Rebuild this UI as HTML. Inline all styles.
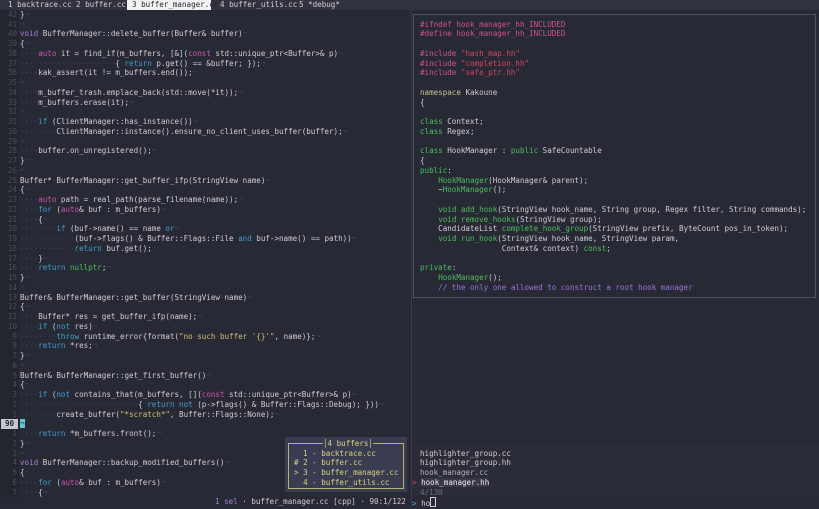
<!DOCTYPE html>
<html><head><meta charset="utf-8"><style>
*{margin:0;padding:0}
body{width:819px;height:507px;overflow:hidden;background:#272935;font-family:"DejaVu Sans Mono","Liberation Mono",monospace;font-size:7.56px;color:#cfcfd4;position:relative}
.r{position:absolute;height:9.75px;line-height:9.75px;white-space:pre}
.L{left:20px}
.n{position:absolute;left:0;width:17px;text-align:right;color:#4a4e5e;height:9.75px;line-height:9.75px}
.d{color:#42465a}
.k{color:#a77ed6}.m{color:#cf55a9}.b{color:#3f9fcc}.g{color:#4cbf5c}.s{color:#cfc272}
.p{color:#d1538c}.q{color:#d6455e}.y{color:#c6c28e}.c{color:#9a74d8}
#tabs{position:absolute;left:0;top:0;width:819px;height:10px;background:#30323e;color:#d0d0d6}
#tabs span{position:absolute;top:0;line-height:10px;white-space:pre}
#gut{position:absolute;left:0;top:10px;width:19px;height:487px;background:#23252f}
#sep{position:absolute;left:411px;top:10px;width:1px;height:497px;background:#3a3c48}
#info{position:absolute;left:413px;top:14px;width:401px;height:282px;border:1px solid #4e5160;background:#272935}
#bbox{position:absolute;left:285px;top:437px;width:122px;height:55px;background:#3a3d52}
#bbox .fr{position:absolute;left:3px;top:6px;right:3px;bottom:3px;border:1px solid #b6b46a}
.yb{color:#d9d27c}
</style></head><body>
<div id="tabs">
<span style="left:8px">1 backtrace.cc</span>
<span style="left:76px">2 buffer.cc</span>
<span style="left:127px;width:84px;background:#f2f2f2;color:#262833;padding-left:5px;box-sizing:border-box">3 buffer_manager.cc</span>
<span style="left:220px">4 buffer_utils.cc</span>
<span style="left:299px">5 *debug*</span>
</div>
<div id="gut"></div>
<div id="sep"></div>

<div class="n" style="top:9.75px">42</div><div class="r L" style="top:9.75px">}<span class="d">¬</span></div>
<div class="n" style="top:19.5px">41</div><div class="r L d" style="top:19.5px">¬</div>
<div class="n" style="top:29.25px">40</div><div class="r L" style="top:29.25px"><span class="k">void</span><span class="d">·</span>BufferManager::delete_buffer(Buffer&amp;<span class="d">·</span>buffer)<span class="d">¬</span></div>
<div class="n" style="top:39px">39</div><div class="r L" style="top:39px">{<span class="d">¬</span></div>
<div class="n" style="top:48.75px">38</div><div class="r L" style="top:48.75px"><span class="d">····</span><span class="m">auto</span> it = find_if(m_buffers, [&amp;](<span class="m">const</span> std::unique_ptr&lt;Buffer&gt;&amp; p)<span class="d">¬</span></div>
<div class="n" style="top:58.5px">37</div><div class="r L" style="top:58.5px"><span class="d">·····················</span>{ <span class="b">return</span> p.get() == &amp;buffer; });<span class="d">¬</span></div>
<div class="n" style="top:68.25px">36</div><div class="r L" style="top:68.25px"><span class="d">····</span>kak_assert(it != m_buffers.end());<span class="d">¬</span></div>
<div class="n" style="top:78px">35</div><div class="r L d" style="top:78px">¬</div>
<div class="n" style="top:87.75px">34</div><div class="r L" style="top:87.75px"><span class="d">····</span>m_buffer_trash.emplace_back(std::move(*it));<span class="d">¬</span></div>
<div class="n" style="top:97.5px">33</div><div class="r L" style="top:97.5px"><span class="d">····</span>m_buffers.erase(it);<span class="d">¬</span></div>
<div class="n" style="top:107.25px">32</div><div class="r L d" style="top:107.25px">¬</div>
<div class="n" style="top:117px">31</div><div class="r L" style="top:117px"><span class="d">····</span><span class="b">if</span> (ClientManager::has_instance())<span class="d">¬</span></div>
<div class="n" style="top:126.75px">30</div><div class="r L" style="top:126.75px"><span class="d">········</span>ClientManager::instance().ensure_no_client_uses_buffer(buffer);<span class="d">¬</span></div>
<div class="n" style="top:136.5px">29</div><div class="r L d" style="top:136.5px">¬</div>
<div class="n" style="top:146.25px">28</div><div class="r L" style="top:146.25px"><span class="d">····</span>buffer.on_unregistered();<span class="d">¬</span></div>
<div class="n" style="top:156px">27</div><div class="r L" style="top:156px">}<span class="d">¬</span></div>
<div class="n" style="top:165.75px">26</div><div class="r L d" style="top:165.75px">¬</div>
<div class="n" style="top:175.5px">25</div><div class="r L" style="top:175.5px">Buffer*<span class="d">·</span>BufferManager::get_buffer_ifp(StringView<span class="d">·</span>name)<span class="d">¬</span></div>
<div class="n" style="top:185.25px">24</div><div class="r L" style="top:185.25px">{<span class="d">¬</span></div>
<div class="n" style="top:195px">23</div><div class="r L" style="top:195px"><span class="d">····</span><span class="m">auto</span> path = real_path(parse_filename(name));<span class="d">¬</span></div>
<div class="n" style="top:204.75px">22</div><div class="r L" style="top:204.75px"><span class="d">····</span><span class="b">for</span> (<span class="m">auto</span>&amp; buf : m_buffers)<span class="d">¬</span></div>
<div class="n" style="top:214.5px">21</div><div class="r L" style="top:214.5px"><span class="d">····</span>{<span class="d">¬</span></div>
<div class="n" style="top:224.25px">20</div><div class="r L" style="top:224.25px"><span class="d">········</span><span class="b">if</span> (buf-&gt;name() == name <span class="b">or</span><span class="d">¬</span></div>
<div class="n" style="top:234px">19</div><div class="r L" style="top:234px"><span class="d">············</span>(buf-&gt;flags() &amp; Buffer::Flags::File <span class="b">and</span> buf-&gt;name() == path))<span class="d">¬</span></div>
<div class="n" style="top:243.75px">18</div><div class="r L" style="top:243.75px"><span class="d">············</span><span class="b">return</span> buf.get();<span class="d">¬</span></div>
<div class="n" style="top:253.5px">17</div><div class="r L" style="top:253.5px"><span class="d">····</span>}<span class="d">¬</span></div>
<div class="n" style="top:263.25px">16</div><div class="r L" style="top:263.25px"><span class="d">····</span><span class="b">return</span> <span class="g">nullptr</span>;<span class="d">¬</span></div>
<div class="n" style="top:273px">15</div><div class="r L" style="top:273px">}<span class="d">¬</span></div>
<div class="n" style="top:282.75px">14</div><div class="r L d" style="top:282.75px">¬</div>
<div class="n" style="top:292.5px">13</div><div class="r L" style="top:292.5px">Buffer&amp;<span class="d">·</span>BufferManager::get_buffer(StringView<span class="d">·</span>name)<span class="d">¬</span></div>
<div class="n" style="top:302.25px">12</div><div class="r L" style="top:302.25px">{<span class="d">¬</span></div>
<div class="n" style="top:312px">11</div><div class="r L" style="top:312px"><span class="d">····</span>Buffer* res = get_buffer_ifp(name);<span class="d">¬</span></div>
<div class="n" style="top:321.75px">10</div><div class="r L" style="top:321.75px"><span class="d">····</span><span class="b">if</span> (<span class="b">not</span> res)<span class="d">¬</span></div>
<div class="n" style="top:331.5px">9</div><div class="r L" style="top:331.5px"><span class="d">········</span><span class="b">throw</span> runtime_error{format(<span class="s">"no<span class="d">·</span>such<span class="d">·</span>buffer<span class="d">·</span>'{}'"</span>, name)};<span class="d">¬</span></div>
<div class="n" style="top:341.25px">8</div><div class="r L" style="top:341.25px"><span class="d">····</span><span class="b">return</span> *res;<span class="d">¬</span></div>
<div class="n" style="top:351px">7</div><div class="r L" style="top:351px">}<span class="d">¬</span></div>
<div class="n" style="top:360.75px">6</div><div class="r L d" style="top:360.75px">¬</div>
<div class="n" style="top:370.5px">5</div><div class="r L" style="top:370.5px">Buffer&amp;<span class="d">·</span>BufferManager::get_first_buffer()<span class="d">¬</span></div>
<div class="n" style="top:380.25px">4</div><div class="r L" style="top:380.25px">{<span class="d">¬</span></div>
<div class="n" style="top:390px">3</div><div class="r L" style="top:390px"><span class="d">····</span><span class="b">if</span> (<span class="b">not</span> contains_that(m_buffers, [](<span class="m">const</span> std::unique_ptr&lt;Buffer&gt;&amp; p)<span class="d">¬</span></div>
<div class="n" style="top:399.75px">2</div><div class="r L" style="top:399.75px"><span class="d">··························</span>{ <span class="b">return</span> <span class="b">not</span> (p-&gt;flags() &amp; Buffer::Flags::Debug); }))<span class="d">¬</span></div>
<div class="n" style="top:409.5px">1</div><div class="r L" style="top:409.5px"><span class="d">········</span>create_buffer(<span class="s">"*scratch*"</span>, Buffer::Flags::None);<span class="d">¬</span></div>
<div class="n" style="top:419.25px;left:1px;width:17px;background:#c4c6d0;color:#272935;text-align:center;font-weight:bold">90</div><div class="r L" style="top:419.25px"><span style="background:#5fc6dc;color:#272935">¬</span></div>
<div class="n" style="top:429px">1</div><div class="r L" style="top:429px"><span class="d">····</span><span class="b">return</span> *m_buffers.front();<span class="d">¬</span></div>
<div class="n" style="top:438.75px">2</div><div class="r L" style="top:438.75px">}<span class="d">¬</span></div>
<div class="n" style="top:448.5px">3</div><div class="r L d" style="top:448.5px">¬</div>
<div class="n" style="top:458.25px">4</div><div class="r L" style="top:458.25px"><span class="k">void</span><span class="d">·</span>BufferManager::backup_modified_buffers()<span class="d">¬</span></div>
<div class="n" style="top:468px">5</div><div class="r L" style="top:468px">{<span class="d">¬</span></div>
<div class="n" style="top:477.75px">6</div><div class="r L" style="top:477.75px"><span class="d">····</span><span class="b">for</span> (<span class="m">auto</span>&amp; buf : m_buffers)<span class="d">¬</span></div>
<div class="n" style="top:487.5px">7</div><div class="r L" style="top:487.5px"><span class="d">····</span>{<span class="d">¬</span></div>

<div id="bbox"><div class="fr"></div></div>
<div class="r yb" style="top:438.75px;left:323px;background:#3a3d52">│4 buffers│</div>
<div class="r yb" style="top:448.5px;left:294px">  1 - backtrace.cc</div>
<div class="r yb" style="top:458.25px;left:294px">#&#160;2 - buffer.cc</div>
<div class="r yb" style="top:468px;left:294px">&gt; 3 - buffer_manager.cc</div>
<div class="r yb" style="top:477.75px;left:294px">  4 - buffer_utils.cc</div>

<div class="r" style="top:497.25px;left:215px"><span class="k">1 sel</span> · buffer_manager.cc [cpp] · 90:1/122</div>

<div id="info"></div>
<div class="r p" style="top:19.5px;left:420px">#ifndef hook_manager_hh_INCLUDED</div>
<div class="r p" style="top:29.25px;left:420px">#define hook_manager_hh_INCLUDED</div>
<div class="r p" style="top:48.75px;left:420px">#include <span class="q">"hash_map.hh"</span></div>
<div class="r p" style="top:58.5px;left:420px">#include <span class="q">"completion.hh"</span></div>
<div class="r p" style="top:68.25px;left:420px">#include <span class="q">"safe_ptr.hh"</span></div>
<div class="r" style="top:87.75px;left:420px"><span class="y">namespace</span> Kakoune</div>
<div class="r" style="top:97.5px;left:420px">{</div>
<div class="r" style="top:117px;left:420px"><span class="g">class</span> Context;</div>
<div class="r" style="top:126.75px;left:420px"><span class="g">class</span> Regex;</div>
<div class="r" style="top:146.25px;left:420px"><span class="g">class</span> HookManager : <span class="g">public</span> SafeCountable</div>
<div class="r" style="top:156px;left:420px">{</div>
<div class="r" style="top:165.75px;left:420px"><span class="g">public</span>:</div>
<div class="r" style="top:175.5px;left:420px">    <span class="g">HookManager</span>(HookManager&amp; parent);</div>
<div class="r" style="top:185.25px;left:420px">    ~<span class="g">HookManager</span>();</div>
<div class="r" style="top:204.75px;left:420px">    <span class="g">void</span> <span class="g">add_hook</span>(StringView hook_name, String group, Regex filter, String commands);</div>
<div class="r" style="top:214.5px;left:420px">    <span class="g">void</span> <span class="g">remove_hooks</span>(StringView group);</div>
<div class="r" style="top:224.25px;left:420px">    CandidateList <span class="g">complete_hook_group</span>(StringView prefix, ByteCount pos_in_token);</div>
<div class="r" style="top:234px;left:420px">    <span class="g">void</span> <span class="g">run_hook</span>(StringView hook_name, StringView param,</div>
<div class="r" style="top:243.75px;left:420px">                  Context&amp; context) <span class="g">const</span>;</div>
<div class="r" style="top:263.25px;left:420px"><span class="g">private</span>:</div>
<div class="r" style="top:273px;left:420px">    <span class="g">HookManager</span>();</div>
<div class="r c" style="top:282.75px;left:420px">    // the only one allowed to construct a root hook manager</div>

<div style="position:absolute;left:413px;top:446px;width:406px;height:49px;background:#2a2c37"></div>
<div class="r" style="top:448.5px;left:420px">highlighter_group.cc</div>
<div class="r" style="top:458.25px;left:420px">highlighter_group.hh</div>
<div class="r" style="top:468px;left:420px;color:#b4b4bc">hook_manager.cc</div>
<div class="r" style="top:477.75px;left:412px"><span style="color:#d04a5a">&gt;</span> <span style="background:#363846;color:#eeeef2">hook_manager.hh</span></div>
<div class="r" style="top:487.5px;left:420px;color:#6a6e7c">4/130</div>
<div class="r" style="top:497.25px;left:412px"><span style="color:#4fb0d8">&gt;</span> ho<span style="display:inline-block;width:4px;height:8px;border:1px solid #cfcfd4;vertical-align:-1px"></span></div>
</body></html>
